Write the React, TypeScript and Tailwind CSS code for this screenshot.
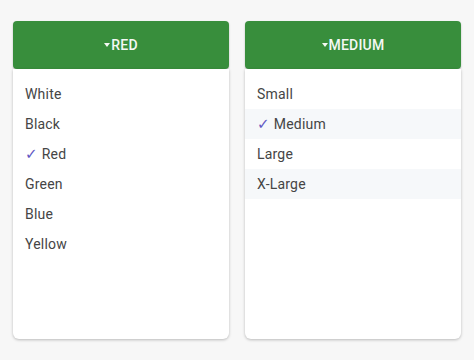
import { useState } from 'react';

interface DropdownProps {
  options: string[];
  selected: string;
  striped?: boolean;
}

const Dropdown = ({ options, selected, striped }: DropdownProps) => {
  const [value, setValue] = useState(selected);

  return (
    <div className="flex flex-1 flex-col">
      <button className="flex h-12 items-center justify-center rounded bg-[#388e3c] text-[14px] font-medium tracking-[0.2px] text-[#f4f8f4] shadow-[0_1px_2px_rgba(0,0,0,0.25)]">
        {/* caret */}
        <span className="mr-px inline-block h-0 w-0 border-x-[3.5px] border-t-[4px] border-x-transparent border-t-[#f4f8f4]" />
        {value.toUpperCase()}
      </button>
      <ul className="flex-1 rounded-b-md bg-white py-2.5 shadow-[0_1px_3px_rgba(0,0,0,0.25)]">
        {options.map((option, index) => (
          <li
            key={option}
            onClick={() => setValue(option)}
            className={`flex h-[30px] cursor-pointer items-center px-3 text-[14px] tracking-[0.2px] text-[#454545] ${
              striped && index % 2 === 1 ? 'bg-[#f6f8fa]' : ''
            }`}
          >
            {option === value && (
              <span className="mr-1 font-['DejaVu_Sans'] text-[15px] leading-none text-[#6258c4]">✓</span>
            )}
            {option}
          </li>
        ))}
      </ul>
    </div>
  );
};

export default function App() {
  return (
    <div
      className="flex h-[360px] w-[474px] gap-4 bg-[#f7f7f7] px-[13px] pb-[21px] pt-[21px]"
      style={{ fontFamily: 'Roboto, "Noto Sans", sans-serif' }}
    >
      <Dropdown options={['White', 'Black', 'Red', 'Green', 'Blue', 'Yellow']} selected="Red" />
      <Dropdown options={['Small', 'Medium', 'Large', 'X-Large']} selected="Medium" striped />
    </div>
  );
}
